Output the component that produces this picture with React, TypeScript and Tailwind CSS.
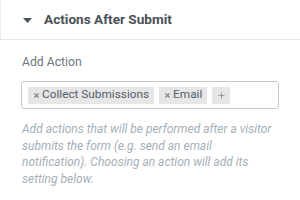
import { Plus } from "lucide-react";

function Tag({ label }: { label: string }) {
    return (
        <span className="flex h-[17px] items-center gap-[3px] bg-[#e6e6e6] pl-[6px] pr-[5px] text-[11.8px] text-[#556068]">
            <svg width="5" height="5" viewBox="0 0 5 5" className="mt-px">
                <path d="M0.5 0.5l4 4M4.5 0.5l-4 4" stroke="#7d8790" strokeWidth="1.2" />
            </svg>
            {label}
        </span>
    );
}

export default function App() {
    return (
        <div className="h-[200px] w-[300px] bg-white font-['Roboto',sans-serif]">
            <div className="flex h-[40px] items-center border-b border-[#e6e9ec] border-l border-l-[#eceeef] pl-[22px]">
                <svg width="9" height="5" viewBox="0 0 9 5" className="mr-[12px] mt-px">
                    <path d="M0 0h9L4.5 5z" fill="#495157" />
                </svg>
                <h2 className="text-[13.6px] font-bold text-[#495157]">Actions After Submit</h2>
            </div>
            <div className="px-[21px] pt-[14px]">
                <label className="block pl-px text-[12.2px] leading-[16px] text-[#6d7882]">Add Action</label>
                <div className="mt-[11px] flex h-[28px] items-center gap-[5px] rounded-[3px] border border-[#c5c9cc] px-[6px]">
                    <Tag label="Collect Submissions" />
                    <Tag label="Email" />
                    <span className="flex h-[17px] w-[18px] items-center justify-center bg-[#e6e6e6] text-[#8a949c]">
                        <Plus size={9} strokeWidth={2.5} />
                    </span>
                </div>
                <p className="mt-[12px] pl-px text-[12px] italic leading-[16.7px] text-[#a4afb7]">
                    Add actions that will be performed after a visitor submits the form (e.g. send an email notification). Choosing an action will add its setting below.
                </p>
            </div>
        </div>
    );
}
